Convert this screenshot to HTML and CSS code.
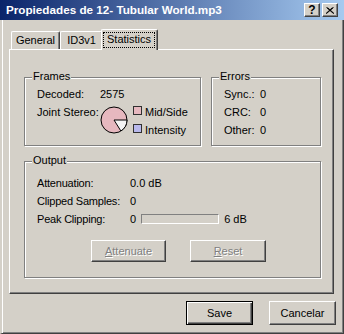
FILE: index.html
```html
<!DOCTYPE html>
<html lang="es">
<head>
  <meta charset="UTF-8" />
  <meta name="viewport" content="width=device-width, initial-scale=1.0" />
  <title>Propiedades de 12- Tubular World.mp3</title>
  <link rel="stylesheet" href="styles.css">
</head>
<body>
  <div class="window">
    <div class="titlebar">
      <span class="title">Propiedades de 12- Tubular World.mp3</span>
      <div class="caption-buttons">
        <span class="cap-btn help">?</span>
        <span class="cap-btn">
          <svg width="8" height="7" viewBox="0 0 8 7">
            <path d="M0.5 0.5 L7.5 6.5 M1.5 0.5 L8 6.5 M7.5 0.5 L0.5 6.5 M6.5 0.5 L0 6.5" stroke="#000" stroke-width="1" />
          </svg>
        </span>
      </div>
    </div>

    <div class="client">
      <div class="tabs">
        <div class="tab tab-general">General</div>
        <div class="tab tab-id3">ID3v1</div>
        <div class="tab tab-active"><span class="focus">Statistics</span></div>
      </div>

      <div class="panel">
        <div class="groups">
          <div class="group frames">
            <span class="group-title">Frames</span>
            <div class="row">
              <span class="lbl lbl-frames">Decoded:</span>
              <span>2575</span>
            </div>
            <div class="row stereo">
              <span class="lbl lbl-frames">Joint Stereo:</span>
              <svg class="pie" width="28" height="28" viewBox="0 0 28 28">
                <circle cx="14" cy="14" r="13" fill="#e6b8bf" stroke="#000" stroke-width="1" />
                <path d="M14 14 L27 14 A13 13 0 0 1 20.9 25 Z" fill="#f4f4f4" stroke="#000" stroke-width="1" />
              </svg>
              <div class="legend">
                <div class="legend-item"><span class="swatch mid"></span>Mid/Side</div>
                <div class="legend-item"><span class="swatch intensity"></span>Intensity</div>
              </div>
            </div>
          </div>

          <div class="group errors">
            <span class="group-title">Errors</span>
            <div class="row"><span class="lbl lbl-errors">Sync.:</span><span>0</span></div>
            <div class="row"><span class="lbl lbl-errors">CRC:</span><span>0</span></div>
            <div class="row"><span class="lbl lbl-errors">Other:</span><span>0</span></div>
          </div>

          <div class="group output">
            <span class="group-title">Output</span>
            <div class="row"><span class="lbl lbl-output">Attenuation:</span><span>0.0 dB</span></div>
            <div class="row"><span class="lbl lbl-output">Clipped Samples:</span><span>0</span></div>
            <div class="row">
              <span class="lbl lbl-output">Peak Clipping:</span>
              <span>0</span>
              <span class="meter"></span>
              <span class="meter-max">6 dB</span>
            </div>
            <div class="actions">
              <button class="btn btn-attenuate" disabled><u>A</u>ttenuate</button>
              <button class="btn btn-reset" disabled><u>R</u>eset</button>
            </div>
          </div>
        </div>
      </div>

      <div class="footer">
        <button class="btn btn-dialog btn-default">Save</button>
        <button class="btn btn-dialog">Cancelar</button>
      </div>
    </div>
  </div>
</body>
</html>
```

FILE: styles.css
```css
body {
  margin: 0;
  font-family: 'Liberation Sans', Arial, sans-serif;
  font-size: 11px;
  color: #000;
  background-color: #d4d0c8;
}
.window {
  width: 344px;
  height: 334px;
  display: flex;
  flex-direction: column;
  background-color: #d4d0c8;
}
.titlebar {
  height: 20px;
  display: flex;
  align-items: center;
  padding: 0 6px 0 6px;
  background: linear-gradient(to right, #0a246a, #a6caf0);
  color: white;
  font-weight: bold;
  flex-shrink: 0;
}
.title {
  font-size: 11.7px;
  line-height: 20px;
  white-space: nowrap;
}
.caption-buttons {
  margin-left: auto;
  display: flex;
  gap: 2px;
}
.cap-btn {
  width: 16px;
  height: 14px;
  box-sizing: border-box;
  display: flex;
  align-items: center;
  justify-content: center;
  background-color: #d4d0c8;
  border: 1px solid;
  border-color: #fff #404040 #404040 #fff;
  box-shadow: inset -1px -1px 0 #808080;
  color: #000;
}
.help {
  font-weight: bold;
  font-size: 12px;
  line-height: 12px;
}
.client {
  flex: 1;
  border-left: 2px solid #d4d0c8;
  border-right: 1px solid #404040;
  border-bottom: 1px solid #404040;
  box-shadow: inset 1px 0 0 #fff, inset -1px -1px 0 #808080;
}

/* tabs */
.tabs {
  display: flex;
  align-items: flex-end;
  margin-top: 9px;
  padding-left: 9px;
}
.tab {
  height: 18px;
  box-sizing: border-box;
  padding-top: 2px;
  line-height: 13px;
  text-align: center;
  border-top: 1px solid #fff;
  border-left: 1px solid #fff;
  border-right: 1px solid #404040;
  border-radius: 2px 2px 0 0;
  box-shadow: inset -1px 0 0 #808080;
}
.tab-general {
  width: 49px;
}
.tab-id3 {
  width: 43px;
}
.tab-active {
  position: relative;
  z-index: 1;
  width: 57px;
  height: 21px;
  margin: 0 -2px -1px -2px;
  padding: 2px 2px 0 1px;
  background-color: #d4d0c8;
}
.focus {
  display: block;
  height: 16px;
  box-sizing: border-box;
  border: 1px dotted #000;
}

/* panel */
.panel {
  height: 245px;
  box-sizing: border-box;
  margin: 0 9px 0 7px;
  padding: 27px 0 0 14px;
  border-top: 1px solid #fff;
  border-left: 1px solid #fff;
  border-right: 1px solid #404040;
  border-bottom: 1px solid #404040;
  box-shadow: inset -1px -1px 0 #808080;
}
.groups {
  display: grid;
  grid-template-columns: 177px 110px;
  grid-template-rows: 69px 117px;
  column-gap: 10px;
  row-gap: 15px;
}
.group {
  position: relative;
  box-sizing: border-box;
  border: 1px solid #808080;
  box-shadow: 1px 1px 0 #fff, inset 1px 1px 0 #fff;
}
.group-title {
  position: absolute;
  top: -8px;
  left: 7px;
  padding: 0 1px;
  line-height: 13px;
  background-color: #d4d0c8;
}
.row {
  display: flex;
  line-height: 18px;
  white-space: nowrap;
}
.frames {
  padding: 7px 0 0 12px;
}
.errors {
  padding: 7px 0 0 12px;
}
.output {
  grid-column: span 2;
  padding: 12px 0 0 12px;
}
.lbl-frames {
  width: 63px;
}
.lbl-errors {
  width: 36px;
}
.lbl-output {
  width: 93px;
  letter-spacing: -0.2px;
}
.pie {
  margin-top: 3px;
}
.legend {
  margin-left: 5px;
}
.legend-item {
  display: flex;
  line-height: 18px;
}
.swatch {
  width: 9px;
  height: 9px;
  box-sizing: border-box;
  margin: 3px 3px 0 0;
  border: 1px solid #303030;
}
.mid {
  background-color: #e6b8bf;
}
.intensity {
  background-color: #b8b8ec;
}
.meter {
  width: 78px;
  height: 10px;
  box-sizing: border-box;
  margin: 4px 0 0 5px;
  border: 1px solid;
  border-color: #808080 #fff #fff #808080;
}
.meter-max {
  margin-left: 5px;
}

/* buttons */
.actions {
  display: flex;
  justify-content: center;
  gap: 24px;
  margin-top: 12px;
}
.btn {
  height: 22px;
  box-sizing: border-box;
  padding: 0;
  font-family: inherit;
  font-size: 11px;
  color: #000;
  background-color: #d4d0c8;
  border: 1px solid;
  border-color: #fff #404040 #404040 #fff;
  border-radius: 0;
  box-shadow: inset -1px -1px 0 #808080;
}
.btn:disabled {
  color: #808080;
  text-shadow: 1px 1px 0 #fff;
}
.btn-attenuate {
  width: 75px;
}
.btn-reset {
  width: 76px;
}
.footer {
  display: flex;
  justify-content: flex-end;
  gap: 16px;
  margin: 7px 7px 0 0;
}
.btn-dialog {
  width: 67px;
  height: 24px;
}
.btn-default {
  border-color: #000;
  box-shadow: inset 1px 1px 0 #fff, inset -1px -1px 0 #404040, inset -2px -2px 0 #808080;
}
```
